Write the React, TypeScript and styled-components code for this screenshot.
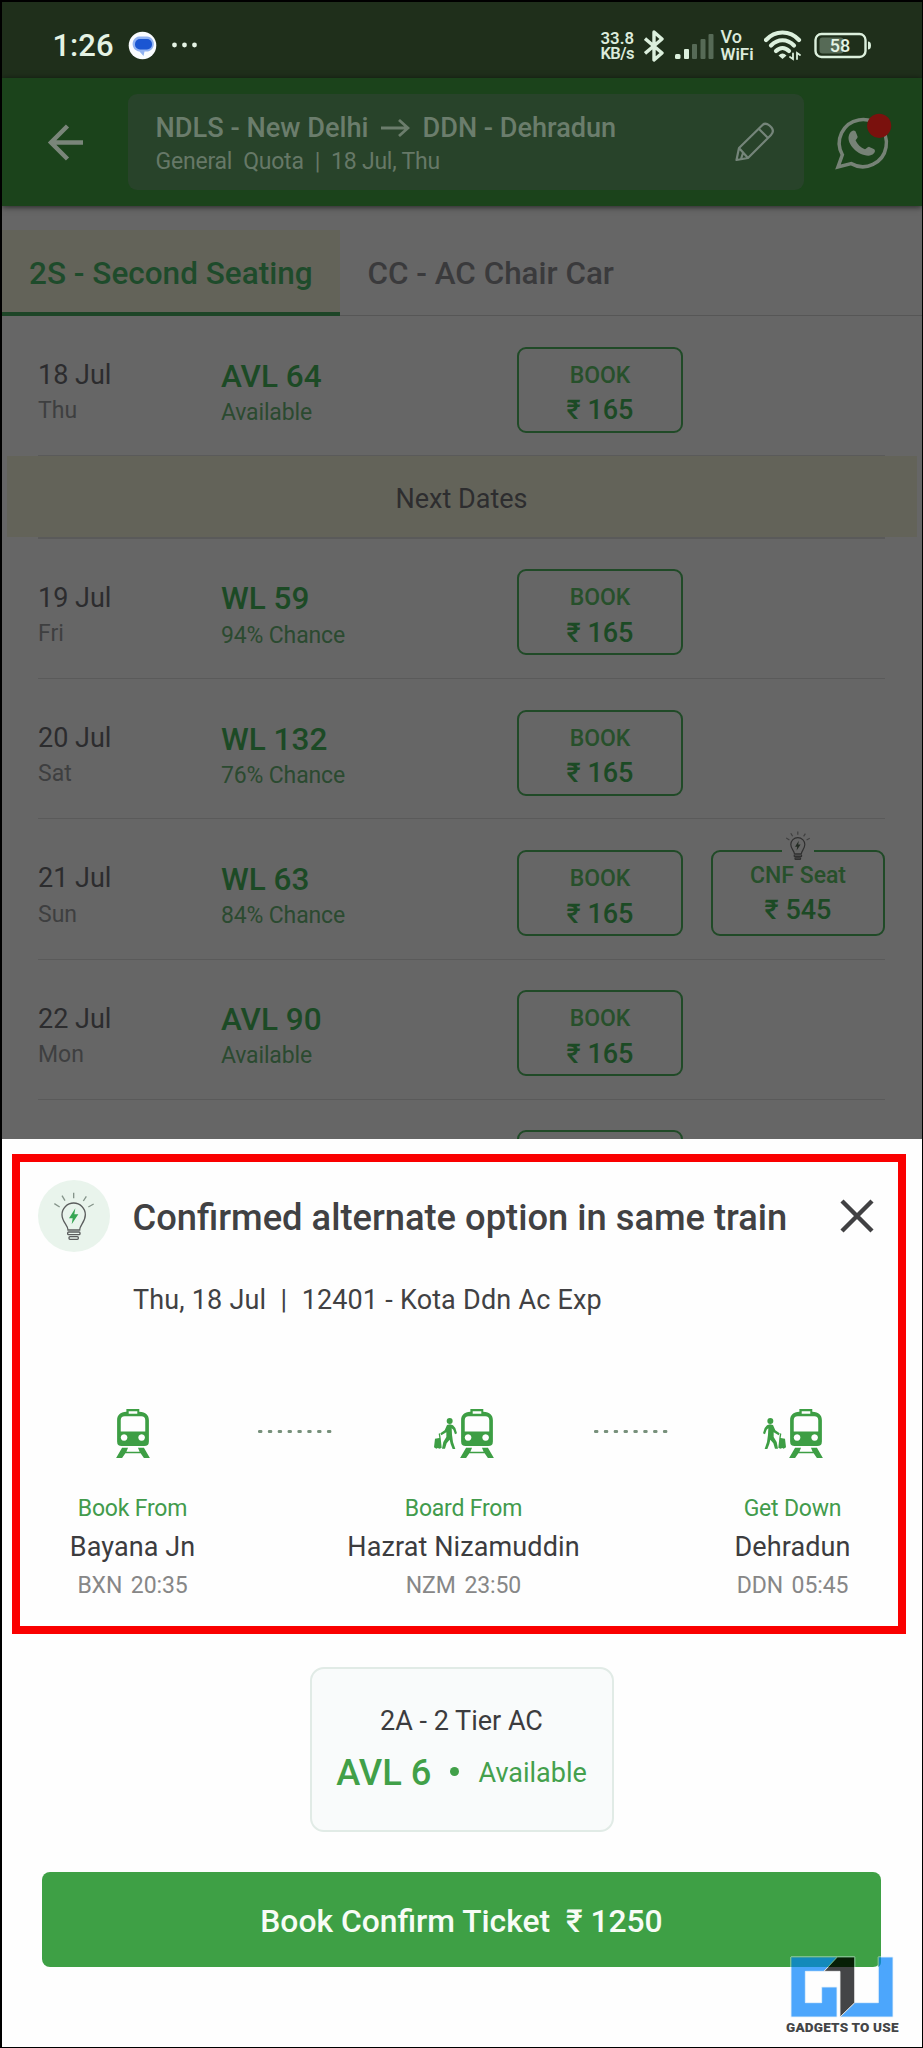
import React from "react";
import styled, { createGlobalStyle } from "styled-components";

const GlobalStyle = createGlobalStyle`
  *, *::before, *::after { box-sizing: border-box; }
  body { margin: 0; background: #000; }
`;

const Screen = styled.div`
  position: relative;
  width: 923px;
  height: 2048px;
  padding: 1.5px;
  background: #000;
  overflow: hidden;
  display: flex;
  flex-direction: column;
  font-family: Roboto, "Liberation Sans", sans-serif;
`;

interface TextProps {
  $size: number;
  $color: string;
  $weight?: number;
  $line?: number;
  $spacing?: number;
  $wordSpacing?: number;
}

const Text = styled.span<TextProps>`
  display: block;
  white-space: pre;
  font-size: ${(p) => p.$size}px;
  color: ${(p) => p.$color};
  font-weight: ${(p) => p.$weight ?? 400};
  line-height: ${(p) => p.$line ?? p.$size * 1.2}px;
  letter-spacing: ${(p) => p.$spacing ?? 0}px;
  word-spacing: ${(p) => p.$wordSpacing ?? 0}px;
`;

/* ---------- status bar ---------- */

const StatusBar = styled.header`
  flex: none;
  height: 76.5px;
  padding: 12px 50px 0 51px;
  display: flex;
  align-items: center;
  justify-content: space-between;
  background: #1f2f1b;
`;

const StatusLeft = styled.div`
  display: flex;
  align-items: center;
`;

const Notifications = styled.svg`
  display: block;
  margin-left: -3px;
`;

const StatusRight = styled.div`
  display: flex;
  align-items: center;
`;

const StackedLabel = styled.div<{ $width: number; $gap: number }>`
  width: ${(p) => p.$width}px;
  margin-right: ${(p) => p.$gap}px;
`;

const StatusIcon = styled.svg<{ $gap: number }>`
  display: block;
  flex: none;
  margin-right: ${(p) => p.$gap}px;
`;

/* ---------- app header ---------- */

const AppHeader = styled.div`
  position: relative;
  flex: none;
  height: 127.5px;
  padding: 16px 30px 15.5px 45px;
  display: flex;
  align-items: center;
  background: #1b431b;
  box-shadow: 0 1px 6px rgba(0, 0, 0, 0.65);
  z-index: 1;
`;

const SearchBox = styled.div`
  flex: none;
  width: 676px;
  height: 96px;
  margin-left: 44px;
  padding: 0 29px 0 28px;
  border-radius: 9px;
  background: #28432a;
  display: flex;
  align-items: center;
  justify-content: space-between;
`;

const RouteSummary = styled.div`
  padding-top: 6px;
`;

const RouteTitle = styled.div`
  display: flex;
  align-items: center;
  gap: 12.5px;
`;

const WhatsAppIcon = styled.svg`
  display: block;
  flex: none;
  margin-left: 31px;
  overflow: visible;
`;

/* ---------- tabs ---------- */

const Tabs = styled.nav`
  flex: none;
  height: 110.5px;
  padding-top: 24px;
  display: flex;
  background: #666;
  border-bottom: 1px solid #565656;
`;

const Tab = styled.div<{ $active?: boolean }>`
  width: ${(p) => (p.$active ? "338.5px" : "auto")};
  height: 86px;
  padding: 7px 27px 0 27.5px;
  display: flex;
  align-items: center;
  background: ${(p) => (p.$active ? "#636359" : "transparent")};
  border-bottom: 4px solid ${(p) => (p.$active ? "#1d4527" : "transparent")};
`;

/* ---------- availability list ---------- */

const List = styled.main`
  flex: none;
  height: 823.3px;
  overflow: hidden;
  background: #666;
`;

const Row = styled.div`
  height: 140.3px;
  margin: 0 36.5px;
  border-bottom: 1.5px solid #5a5a5a;
  display: flex;
  align-items: flex-start;
`;

const DateCell = styled.div`
  flex: none;
  width: 183px;
  padding-top: 42px;
`;

const StatusCell = styled.div`
  flex: none;
  width: 296px;
  padding-top: 42.5px;
`;

const FareButton = styled.div<{ $width: number; $top: number }>`
  position: relative;
  flex: none;
  width: ${(p) => p.$width}px;
  height: 86px;
  margin-top: 30.5px;
  margin-right: 28px;
  padding-top: ${(p) => p.$top}px;
  border: 2px solid #204a27;
  border-radius: 9px;
  text-align: center;

  &:last-child {
    margin-right: 0;
  }
`;

const ButtonBadge = styled.div`
  position: absolute;
  top: -21px;
  left: 50%;
  width: 32px;
  height: 28px;
  margin-left: -16px;
  background: #666;
  display: flex;
  justify-content: center;
`;

const NextRow = styled.div`
  display: flex;
  margin-left: 515.5px;
`;

const DateBand = styled.div`
  height: 81px;
  margin: 0 5px 0 5px;
  padding-top: 4px;
  background: #636359;
  display: flex;
  align-items: center;
  justify-content: center;
`;

const Divider = styled.div`
  height: 1.5px;
  margin: 0 36.5px;
  background: #5a5a5a;
`;

/* ---------- bottom sheet ---------- */

const Sheet = styled.section`
  flex: 1;
  background: #fefefe;
  padding: 15px 16px 0 10.5px;
`;

const Highlight = styled.div`
  width: 893.5px;
  height: 480px;
  border: 8.5px solid #fa0000;
`;

const SheetHeader = styled.div`
  height: 72px;
  margin: 17.5px 24px 0 17.5px;
  display: flex;
  align-items: center;
`;

const SheetTitle = styled.h1`
  margin: 4px 0 0;
`;

const BulbCircle = styled.div`
  width: 72px;
  height: 72px;
  margin-right: 23px;
  border-radius: 50%;
  background: #e9f4ec;
  display: flex;
  align-items: center;
  justify-content: center;
`;

const CloseIcon = styled.svg`
  display: block;
  margin-left: auto;
`;

const TrainInfo = styled.div`
  margin: 31.5px 0 0 113px;
`;

const Journey = styled.div`
  margin: 92px 0 0 32.5px;
  display: grid;
  grid-template-columns: 160px 131px 240px 129px 160px;
`;

const Stop = styled.div`
  display: flex;
  flex-direction: column;
  align-items: center;
`;

const StopIcon = styled.div`
  height: 49px;
  margin-bottom: 30.5px;
  display: flex;
  align-items: flex-start;
  gap: 3px;
`;

const Dots = styled.svg<{ $left: number }>`
  display: block;
  margin: 20px 0 0 ${(p) => p.$left}px;
`;

const TravellerIcon = styled.svg<{ $flip?: boolean }>`
  display: block;
  margin-top: 8.5px;
  transform: ${(p) => (p.$flip ? "scaleX(-1)" : "none")};
`;

const ClassCard = styled.div`
  width: 304px;
  height: 164.5px;
  margin: 33px 0 0 297.5px;
  padding-top: 33px;
  border: 2px solid #e1ebe6;
  border-radius: 14px;
  background: #f9fbfb;
  display: flex;
  flex-direction: column;
  align-items: center;
`;

const Availability = styled.div`
  height: 54px;
  margin-top: 5.5px;
  display: flex;
  align-items: center;
`;

const Bullet = styled.i`
  width: 9px;
  height: 9px;
  margin: 0 19px 3px 19px;
  border-radius: 50%;
  background: #41a048;
`;

const BookConfirm = styled.div`
  width: 839px;
  height: 95px;
  margin: 40.5px 0 0 30px;
  padding-top: 3px;
  border-radius: 8px;
  background: #3ea045;
  display: flex;
  align-items: center;
  justify-content: center;
`;

const Watermark = styled.div`
  position: absolute;
  left: 786px;
  top: 1956px;
  width: 113px;
`;

/* ---------- drawings ---------- */

const LogoSvg = styled.svg`
  display: block;
`;

const Bulb = ({ width, stroke, bolt, ray, line }: { width: number; stroke: string; bolt: string; ray: string; line: number }) => (
  <svg width={width} height={width * 1.2} viewBox="163 184 120 144" fill="none" stroke={stroke} strokeWidth={line}>
    <g stroke={ray}>
      <path d="M222 186v17M187 195l9 15M260 197l-9 14M164 219l16 10M282 220l-16 9" />
    </g>
    <path d="M205 298c0-15-18-24-18-46a35 35 0 0 1 70 0c0 22-17 31-17 46z" />
    <rect x="204" y="304" width="37" height="8" rx="3" />
    <rect x="208" y="318" width="28" height="8" rx="3" />
    <path d="M227 233l-19 30h11l-3 18 20-30h-12z" fill={bolt} stroke="none" />
  </svg>
);

const Train = () => (
  <svg width="34" height="49" viewBox="0 0 102 148" fill="#3d9e44">
    <path
      fillRule="evenodd"
      d="M31 0H70V8C90 9 99 18 99 34V98Q99 112 85 112H17Q3 112 3 98V34C3 18 12 9 31 8ZM38 7V14H64V7ZM26 22Q14 22 14 34V68H88V34Q88 22 76 22ZM24 76a10 10 0 1 0 .1 0ZM77 76a10 10 0 1 0 .1 0Z"
    />
    <path d="M18 117H36L31 129H71L66 117H84L102 148H84L74 134H28L18 148H0Z" />
  </svg>
);

const Traveller = ({ flip }: { flip?: boolean }) => (
  <TravellerIcon $flip={flip} width="23" height="32" viewBox="0 0 69 96" fill="#3d9e44">
    <circle cx="22" cy="9" r="9" />
    <path d="M12 22L21 19L30 21L37 37L50 46L47 52L32 43L32 57L41 72L45 92H36L31 76L22 65L19 78L13 93H5L12 72L15 50L16 31L11 35L6 49L0 46L5 30Z" />
    <path d="M51 46L55 47L53 60L66 62L69 88L62 92L58 90L52 92L46 89L49 60Z" />
  </TravellerIcon>
);

const DotLine = ({ left }: { left: number }) => (
  <Dots $left={left} width="76" height="5" viewBox="0 0 76 5">
    {Array.from({ length: 8 }, (_, i) => (
      <rect key={i} x={i * 9.85} y="1" width="4.4" height="3" rx="1.2" fill="#77907b" />
    ))}
  </Dots>
);

const Logo = () => (
  <LogoSvg width="113" height="64" viewBox="258 348 339 192">
    <defs>
      <clipPath id="over-button">
        <path d="M258 345H543V366Q543 381 528 381H258Z" />
      </clipPath>
      <g id="mark-blue">
        <path d="M273 351H412L372 394H316V488H365V441H411V531H273Z" />
        <path d="M464 488H535V351H579V531H420Z" />
      </g>
      <path id="mark-dark" d="M412 351H464V488L420 531V394H372Z" />
    </defs>
    <use href="#mark-blue" fill="#4ca6fc" stroke="#e8f3fb" strokeWidth="2.5" />
    <use href="#mark-dark" fill="#444547" stroke="#f3f3f3" strokeWidth="2.5" />
    <g clipPath="url(#over-button)">
      <use href="#mark-blue" fill="#138abb" stroke="#75bd87" strokeWidth="2.5" />
      <use href="#mark-dark" fill="#071f06" stroke="#75bd87" strokeWidth="2.5" />
    </g>
  </LogoSvg>
);

/* ---------- data ---------- */

const GREEN = "#1c4a25";

interface Fare {
  date: string;
  day: string;
  status: string;
  note: string;
  cnf?: string;
}

const firstDay: Fare = { date: "18 Jul", day: "Thu", status: "AVL 64", note: "Available" };
const nextDays: Fare[] = [
  { date: "19 Jul", day: "Fri", status: "WL 59", note: "94% Chance" },
  { date: "20 Jul", day: "Sat", status: "WL 132", note: "76% Chance" },
  { date: "21 Jul", day: "Sun", status: "WL 63", note: "84% Chance", cnf: "₹ 545" },
  { date: "22 Jul", day: "Mon", status: "AVL 90", note: "Available" },
];

const FareRow = ({ fare }: { fare: Fare }) => (
  <Row>
    <DateCell>
      <Text $size={27} $line={35.3} $color="#2c2c2e">{fare.date}</Text>
      <Text $size={23} $line={35.3} $color="#3e3f40">{fare.day}</Text>
    </DateCell>
    <StatusCell>
      <Text $size={31.5} $line={36.3} $weight={500} $color={GREEN}>{fare.status}</Text>
      <Text $size={23} $line={36.3} $color="#2b4a30" $spacing={-0.15}>{fare.note}</Text>
    </StatusCell>
    <FareButton $width={166} $top={10}>
      <Text $size={23} $line={34.7} $weight={500} $color="#27502b">BOOK</Text>
      <Text $size={27} $line={34.7} $weight={500} $color={GREEN}>₹ 165</Text>
    </FareButton>
    {fare.cnf && (
      <FareButton $width={174} $top={7}>
        <ButtonBadge>
          <Bulb width={24} stroke="#303030" bolt="#242c24" ray="#404040" line={6} />
        </ButtonBadge>
        <Text $size={23} $line={34.3} $weight={500} $color="#27502b">CNF Seat</Text>
        <Text $size={27} $line={34.3} $weight={500} $color={GREEN}>{fare.cnf}</Text>
      </FareButton>
    )}
  </Row>
);

interface StopInfo {
  label: string;
  station: string;
  time: string;
  traveller?: "boarding" | "leaving";
}

const JourneyStop = ({ stop }: { stop: StopInfo }) => (
  <Stop>
    <StopIcon>
      {stop.traveller && <Traveller flip={stop.traveller === "boarding"} />}
      <Train />
    </StopIcon>
    <Text $size={23} $line={39} $color="#429b4c" $spacing={-0.2}>{stop.label}</Text>
    <Text $size={27} $line={39} $color="#3c3c3e" $spacing={0.1}>{stop.station}</Text>
    <Text $size={23} $line={37} $color="#878787" $spacing={-0.1} $wordSpacing={3}>{stop.time}</Text>
  </Stop>
);

export default function App() {
  return (
    <>
      <GlobalStyle />
      <Screen>
        <StatusBar>
          <StatusLeft>
            <Text $size={31} $line={34} $weight={500} $color="#e4f3e4">1:26</Text>
            <Notifications width="100" height="30" viewBox="110 30 100 30">
              <circle cx="141.5" cy="44.5" r="13.8" fill="#fafcff" />
              <path d="M138 35.500h8c9 1 9 13 1 15h-3.500l-1 4.500-4-4.500c-9-1-9-14-.5-15z" fill="#91b2f2" />
              <rect x="134" y="38" width="17" height="10.5" rx="5" fill="#1b56d2" />
              {[173.5, 183.5, 193.5].map((x) => (
                <circle key={x} cx={x} cy="44" r="2.4" fill="#e4f3e4" />
              ))}
            </Notifications>
          </StatusLeft>
          <StatusRight>
            <StackedLabel $width={35} $gap={8}>
              <Text $size={16.8} $line={15} $weight={600} $color="#dcebdc">33.8</Text>
              <Text $size={16.5} $line={15} $weight={600} $color="#dcebdc" $spacing={-0.6}>KB/s</Text>
            </StackedLabel>
            <StatusIcon $gap={11} width="20" height="32" viewBox="0 0 20 32" fill="none" stroke="#dcf0dd" strokeWidth="3.4" strokeLinejoin="round">
              <path d="M1 8.5L18 23L10 30V2L18 9L1 23.5" />
            </StatusIcon>
            <StatusIcon $gap={6} width="40" height="32" viewBox="0 0 40 32">
              <rect x="0" y="24" width="5.5" height="5" rx="1.5" fill="#dcf0dd" />
              <rect x="9" y="19" width="5" height="10" rx="1" fill="#dcf0dd" />
              <rect x="17" y="14" width="5" height="15" rx="1" fill="#566a56" />
              <rect x="25.5" y="9" width="5" height="20" rx="1" fill="#566a56" />
              <rect x="33.5" y="4" width="5" height="25" rx="1" fill="#566a56" />
            </StatusIcon>
            <StackedLabel $width={35} $gap={8}>
              <Text $size={18} $line={17.5} $weight={500} $color="#dcebdc">Vo</Text>
              <Text $size={17} $line={17.5} $weight={600} $color="#dcebdc">WiFi</Text>
            </StackedLabel>
            <StatusIcon $gap={12} width="38" height="31" viewBox="0 0 38 31" fill="none" stroke="#dcf0dd" strokeWidth="4.2" strokeLinecap="round">
              <path d="M2 10C11 0 26 0 35 10" />
              <path d="M7 15.5C14 8.5 23 8.5 30 15.5" />
              <path d="M12 21C16 17 21 17 25 21" />
              <path d="M14.5 25.5Q18.5 21.5 22.5 25.5L18.5 29Z" fill="#dcf0dd" stroke="none" />
              <path d="M26 27l3 2V23.5M33 29V23l3 2" strokeWidth="1.8" />
            </StatusIcon>
            <svg width="58" height="28" viewBox="0 0 58 28">
              <rect x="1.5" y="2" width="50" height="23" rx="6" fill="none" stroke="#dcf0dd" strokeWidth="2.4" />
              <rect x="5.5" y="5.5" width="24" height="16" rx="3" fill="#566a56" />
              <path d="M54 9.5q3 0 3 4t-3 4z" fill="#dcf0dd" />
              <text x="26" y="20" textAnchor="middle" fontSize="18" fontWeight="500" fill="#e4f3e4">58</text>
            </svg>
          </StatusRight>
        </StatusBar>

        <AppHeader>
          <svg width="37" height="37" viewBox="0 0 37 37" fill="none" stroke="#7a867a" strokeWidth="4.5">
            <path d="M36 18.5H4M20.5 2L4 18.5L20.5 35" />
          </svg>
          <SearchBox>
            <RouteSummary>
              <RouteTitle>
                <Text $size={27.2} $line={34} $weight={500} $color="#6b7d6c">NDLS - New Delhi</Text>
                <svg width="29" height="18" viewBox="0 0 29 18" fill="none" stroke="#6b7d6c" strokeWidth="2.8">
                  <path d="M0 9H27M18 1L27 9L18 17" />
                </svg>
                <Text $size={27.1} $line={34} $weight={500} $color="#6b7d6c">DDN - Dehradun</Text>
              </RouteTitle>
              <Text $size={23} $line={34} $color="#667867" $spacing={-0.22}>General  Quota  |  18 Jul, Thu</Text>
            </RouteSummary>
            <svg width="40" height="40" viewBox="0 0 40 40" fill="none" stroke="#75857a" strokeWidth="2.2" strokeLinejoin="round">
              <path d="M1.5 38L4 26L27 3.5Q30 0 34.5 3.5L36.5 5.5Q39.5 9.5 36 13L13 36ZM4 26L13 36M24 7L33 16M8 31L6 37" />
            </svg>
          </SearchBox>
          <WhatsAppIcon width="53" height="53" viewBox="0 0 54 54" fill="none">
            <path d="M3 52L7.5 39.5A24 24 0 1 1 16.5 48.500Z" stroke="#768276" strokeWidth="3.6" />
            <path d="M17 15.5c2-1.5 4-.5 4.5 1.5l1.5 4c.5 2-2 3-2 4 2 4 5 7 9.5 9 1.5 0 2.5-3 4.5-2.5l5 2.5c2.5 3-2 6.5-6 6.5-11 0-22-12-20-20 .5-2.5 1.5-4 3-5z" fill="#768276" />
            <circle cx="45" cy="10" r="12.3" fill="#7a110d" />
          </WhatsAppIcon>
        </AppHeader>

        <Tabs>
          <Tab $active>
            <Text $size={31.5} $weight={500} $color="#1e4b2b">2S - Second Seating</Text>
          </Tab>
          <Tab>
            <Text $size={31.4} $weight={500} $color="#3a3a3c">CC - AC Chair Car</Text>
          </Tab>
        </Tabs>

        <List>
          <FareRow fare={firstDay} />
          <DateBand>
            <Text $size={27} $color="#2d2d2f">Next Dates</Text>
          </DateBand>
          <Divider />
          {nextDays.map((fare) => (
            <FareRow key={fare.date} fare={fare} />
          ))}
          <NextRow>
            <FareButton $width={166} $top={0} />
          </NextRow>
        </List>

        <Sheet>
          <Highlight>
            <SheetHeader>
              <BulbCircle>
                <Bulb width={40} stroke="#5b5d5d" bolt="#36a653" ray="#85948a" line={4} />
              </BulbCircle>
              <SheetTitle>
                <Text $size={36.3} $weight={500} $color="#414143">Confirmed alternate option in same train</Text>
              </SheetTitle>
              <CloseIcon width="34" height="34" viewBox="0 0 34 34" stroke="#414143" strokeWidth="4.4">
                <path d="M2 2L32 32M32 2L2 32" />
              </CloseIcon>
            </SheetHeader>
            <TrainInfo>
              <Text $size={27} $line={34} $color="#414143" $spacing={0.1} $wordSpacing={0.4}>Thu, 18 Jul  |  12401 - Kota Ddn Ac Exp</Text>
            </TrainInfo>
            <Journey>
              <JourneyStop stop={{ label: "Book From", station: "Bayana Jn", time: "BXN 20:35" }} />
              <DotLine left={45} />
              <JourneyStop stop={{ label: "Board From", station: "Hazrat Nizamuddin", time: "NZM 23:50", traveller: "boarding" }} />
              <DotLine left={10} />
              <JourneyStop stop={{ label: "Get Down", station: "Dehradun", time: "DDN 05:45", traveller: "leaving" }} />
            </Journey>
          </Highlight>

          <ClassCard>
            <Text $size={27} $line={38} $color="#3c3c3e">2A - 2 Tier AC</Text>
            <Availability>
              <Text $size={36.3} $weight={500} $color="#41a048">AVL 6</Text>
              <Bullet />
              <Text $size={27} $color="#44a04c">Available</Text>
            </Availability>
          </ClassCard>

          <BookConfirm>
            <Text $size={31.8} $weight={500} $color="#f7fcf6">Book Confirm Ticket  ₹ 1250</Text>
          </BookConfirm>
        </Sheet>

        <Watermark>
          <Logo />
          <Text $size={13.5} $line={15} $weight={900} $color="#444547" $spacing={0.2}>GADGETS TO USE</Text>
        </Watermark>
      </Screen>
    </>
  );
}
